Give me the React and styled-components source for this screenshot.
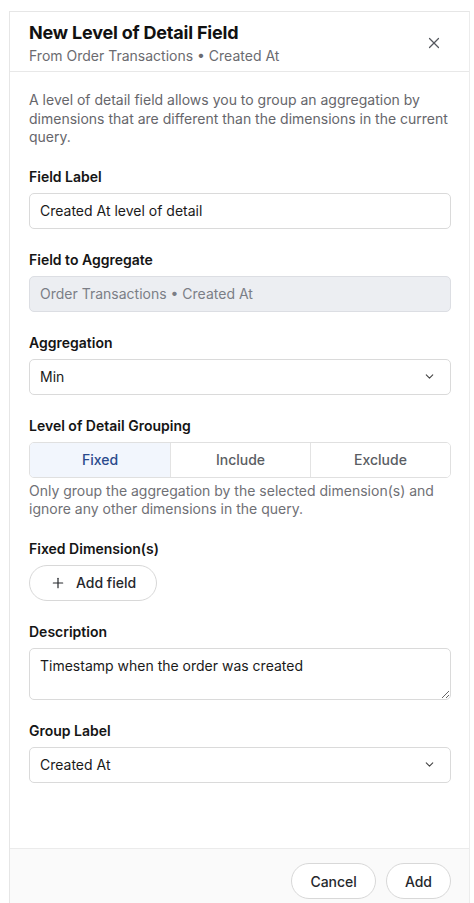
import React from 'react';
import styled, { createGlobalStyle } from 'styled-components';
import { ChevronDown, X, Plus } from 'lucide-react';

const GlobalStyle = createGlobalStyle`
  html, body {
    margin: 0;
    padding: 0;
    background: #ffffff;
  }
  body {
    font-family: Inter, "Noto Sans", "Liberation Sans", sans-serif;
    color: #1c1c1e;
    -webkit-font-smoothing: antialiased;
  }
  * { box-sizing: border-box; }
`;

const Page = styled.div`
  height: 903px;
  padding: 11px 4px 0 9px;
  display: flex;
`;

const Panel = styled.div`
  flex: 1;
  display: flex;
  flex-direction: column;
  border-top: 1px solid #e6e6e6;
  border-left: 1px solid #e6e6e6;
  border-right: 1px solid #ececec;
  background: #fff;
`;

const Header = styled.div`
  display: flex;
  align-items: center;
  justify-content: space-between;
  padding: 9px 18px 6px 19px;
  border-bottom: 1px solid #e8e8e8;
`;

const Title = styled.h1`
  margin: 0;
  font-size: 18px;
  line-height: 24px;
  font-weight: 700;
  color: #111;
  letter-spacing: -0.2px;
`;

const Subtitle = styled.div`
  margin-top: 2px;
  font-size: 14px;
  line-height: 18px;
  color: #6b6b70;
`;

const CloseButton = styled.button`
  border: none;
  background: none;
  padding: 0;
  margin-right: 8px;
  color: #55585e;
  display: flex;
  cursor: pointer;
`;

const Body = styled.div`
  flex: 1;
  padding: 19px 18px 0 19px;
  display: flex;
  flex-direction: column;
  gap: 23px;
`;

const Intro = styled.p`
  margin: 0 0 -1px;
  font-size: 14px;
  line-height: 18.5px;
  color: #66666b;
`;

const Group = styled.div`
  display: flex;
  flex-direction: column;
`;

const Label = styled.label`
  font-size: 14px;
  line-height: 16px;
  font-weight: 600;
  color: #151515;
  margin-bottom: 8px;
`;

const Box = styled.div`
  height: 36px;
  display: flex;
  align-items: center;
  justify-content: space-between;
  padding: 0 14px 0 10px;
  border: 1px solid ${p => (p.$disabled ? '#dcdee3' : '#dadada')};
  border-radius: 5px;
  background: ${p => (p.$disabled ? '#eceef2' : '#fff')};
  color: ${p => (p.$disabled ? '#7b7e86' : '#1a1a1a')};
  font-size: 14px;
`;

const TextArea = styled.textarea`
  height: 52px;
  padding: 8px 10px;
  border: 1px solid #dadada;
  border-radius: 5px;
  font-family: inherit;
  font-size: 14px;
  line-height: 18px;
  color: #1a1a1a;
  resize: vertical;
  outline: none;
`;

const Segmented = styled.div`
  height: 36px;
  display: grid;
  grid-template-columns: 1fr 1fr 1fr;
  border: 1px solid #e0e0e0;
  border-radius: 5px;
  overflow: hidden;
`;

const Segment = styled.button`
  border: none;
  border-left: ${p => (p.$first ? 'none' : '1px solid #e3e3e3')};
  background: ${p => (p.$active ? '#f2f6fd' : '#fff')};
  color: ${p => (p.$active ? '#2a4a8c' : '#5a5d63')};
  font-family: inherit;
  font-size: 14px;
  font-weight: 500;
  cursor: pointer;
`;

const Help = styled.p`
  margin: 4px 0 0;
  font-size: 14px;
  line-height: 18px;
  color: #6f7075;
`;

const PillButton = styled.button`
  height: 36px;
  align-self: ${p => (p.$start ? 'flex-start' : 'auto')};
  display: inline-flex;
  align-items: center;
  justify-content: center;
  gap: 10px;
  padding: 0 ${p => p.$px || 18}px;
  border: 1px solid #d8d8d8;
  border-radius: 18px;
  background: #fff;
  color: #26282c;
  font-family: inherit;
  font-size: 14px;
  font-weight: 500;
  cursor: pointer;
`;

const Footer = styled.div`
  display: flex;
  justify-content: flex-end;
  gap: 10px;
  padding: 14px 18px 0;
  height: 55px;
  border-top: 1px solid #ebebeb;
  background: #fafafa;
`;

const Select = ({ value }) => (
  <Box>
    <span>{value}</span>
    <ChevronDown size={13} strokeWidth={2} color="#444" />
  </Box>
);

export default function App() {
  return (
    <>
      <GlobalStyle />
      <Page>
        <Panel>
          <Header>
            <div>
              <Title>New Level of Detail Field</Title>
              <Subtitle>From Order Transactions • Created At</Subtitle>
            </div>
            <CloseButton aria-label="Close">
              <X size={18} strokeWidth={1.6} />
            </CloseButton>
          </Header>

          <Body>
            <Intro>
              A level of detail field allows you to group an aggregation by
              dimensions that are different than the dimensions in the current
              query.
            </Intro>

            <Group>
              <Label>Field Label</Label>
              <Box>Created At level of detail</Box>
            </Group>

            <Group>
              <Label>Field to Aggregate</Label>
              <Box $disabled>Order Transactions • Created At</Box>
            </Group>

            <Group>
              <Label>Aggregation</Label>
              <Select value="Min" />
            </Group>

            <Group>
              <Label>Level of Detail Grouping</Label>
              <Segmented>
                <Segment $first $active>Fixed</Segment>
                <Segment>Include</Segment>
                <Segment>Exclude</Segment>
              </Segmented>
              <Help>
                Only group the aggregation by the selected dimension(s) and
                ignore any other dimensions in the query.
              </Help>
            </Group>

            <Group>
              <Label>Fixed Dimension(s)</Label>
              <PillButton $start $px={20}>
                <Plus size={16} strokeWidth={1.8} />
                Add field
              </PillButton>
            </Group>

            <Group>
              <Label>Description</Label>
              <TextArea defaultValue="Timestamp when the order was created" />
            </Group>

            <Group>
              <Label>Group Label</Label>
              <Select value="Created At" />
            </Group>
          </Body>

          <Footer>
            <PillButton $px={18}>Cancel</PillButton>
            <PillButton $px={18}>Add</PillButton>
          </Footer>
        </Panel>
      </Page>
    </>
  );
}
